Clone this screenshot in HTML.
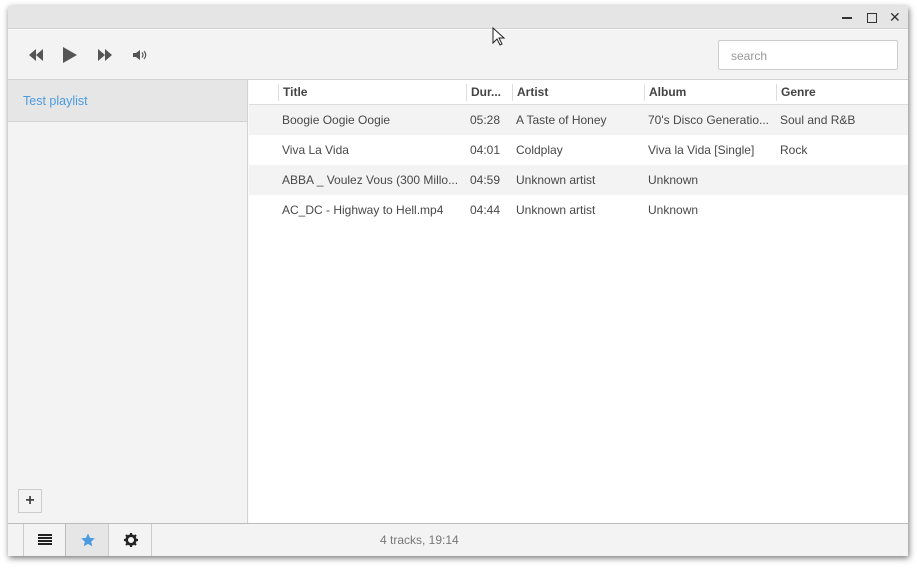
<!DOCTYPE html>
<html><head><style>
*{margin:0;padding:0;box-sizing:border-box}
body{width:917px;height:568px;background:#fff;position:relative;overflow:hidden;font-family:"Liberation Sans","DejaVu Sans",sans-serif;font-size:12px;color:#484848}
.a{position:absolute}
.win{left:8px;top:6px;width:900px;height:550px;background:#fafafa;box-shadow:1px 2px 6px rgba(0,0,0,.55);overflow:hidden}
.cell{position:absolute;white-space:nowrap;top:8px}
</style></head><body>
<div class="a win">
  <div class="a" style="left:0;top:0;width:900px;height:23px;background:#e5e5e5;border-bottom:1px solid #d2d2d2"></div>
  <div class="a" style="left:834px;top:11px;width:10px;height:2px;background:#333"></div>
  <div class="a" style="left:859px;top:7px;width:10px;height:10px;border:1.5px solid #333"></div>
  <div class="a" style="left:881px;top:3px;font-size:14px;color:#333;font-weight:bold">✕</div>
  <div class="a" style="left:0;top:24px;width:900px;height:50px;background:#f3f3f3;border-bottom:1px solid #d2d2d2"></div>
  <svg class="a" style="left:20px;top:40px" width="130" height="18" viewBox="0 0 130 18">
    <path d="M8 3v12L1 9zM15 3v12L8 9z" fill="#555"/>
    <path d="M35 1v16l14-8z" fill="#555"/>
    <path d="M70 3v12l7-6zM77 3v12l7-6z" fill="#555"/>
    <path d="M105 7h3l4-3v10l-4-3h-3z" fill="#555"/>
    <path d="M114 6.5q2 2.5 0 5M116 5q3.5 4 0 8" stroke="#555" stroke-width="1.2" fill="none"/>
  </svg>
  <svg class="a" style="left:484px;top:21px" width="14" height="20" viewBox="0 0 14 20"><path d="M1 1v15l4-4 3 6 2-1-3-6h5z" fill="#fff" stroke="#222" stroke-width="1"/></svg>
  <div class="a" style="left:710px;top:34px;width:180px;height:30px;background:#fff;border:1px solid #ccc;border-radius:2px;padding:8px 12px;color:#999;font-size:12px">search</div>
  <div class="a" style="left:0;top:74px;width:240px;height:443px;background:#f3f3f3;border-right:1px solid #d2d2d2"></div>
  <div class="a" style="left:0;top:74px;width:239px;height:42px;background:#e6e6e6;border-bottom:1px solid #d2d2d2;padding:14px 15px;color:#4a9be0;font-size:12.5px">Test playlist</div>
  <div class="a" style="left:10px;top:483px;width:24px;height:24px;border:1px solid #ccc;text-align:center;font-weight:bold;font-size:16px;line-height:21px;color:#444">+</div>
  <div class="a" style="left:241px;top:74px;width:659px;height:25px;background:#fff;border-bottom:1px solid #ddd;font-weight:bold;color:#444">
    <div class="a" style="left:29px;top:4px;height:17px;border-left:1px solid #ddd"></div>
    <div class="a" style="left:217px;top:4px;height:17px;border-left:1px solid #ddd"></div>
    <div class="a" style="left:263px;top:4px;height:17px;border-left:1px solid #ddd"></div>
    <div class="a" style="left:395px;top:4px;height:17px;border-left:1px solid #ddd"></div>
    <div class="a" style="left:527px;top:4px;height:17px;border-left:1px solid #ddd"></div>
    <div class="cell" style="left:34px;top:5px">Title</div>
    <div class="cell" style="left:222px;top:5px">Dur...</div>
    <div class="cell" style="left:268px;top:5px">Artist</div>
    <div class="cell" style="left:400px;top:5px">Album</div>
    <div class="cell" style="left:532px;top:5px">Genre</div>
  </div>
  <div class="a" style="left:241px;top:99px;width:659px;height:418px;background:#fff">
    <div class="a" style="left:0;top:0;width:659px;height:30px;background:#f3f3f3">
      <div class="cell" style="left:33px">Boogie Oogie Oogie</div><div class="cell" style="left:221px">05:28</div><div class="cell" style="left:267px">A Taste of Honey</div><div class="cell" style="left:399px">70's Disco Generatio...</div><div class="cell" style="left:531px">Soul and R&amp;B</div>
    </div>
    <div class="a" style="left:0;top:30px;width:659px;height:30px">
      <div class="cell" style="left:33px">Viva La Vida</div><div class="cell" style="left:221px">04:01</div><div class="cell" style="left:267px">Coldplay</div><div class="cell" style="left:399px">Viva la Vida [Single]</div><div class="cell" style="left:531px">Rock</div>
    </div>
    <div class="a" style="left:0;top:60px;width:659px;height:30px;background:#f3f3f3">
      <div class="cell" style="left:33px">ABBA _ Voulez Vous (300 Millo...</div><div class="cell" style="left:221px">04:59</div><div class="cell" style="left:267px">Unknown artist</div><div class="cell" style="left:399px">Unknown</div>
    </div>
    <div class="a" style="left:0;top:90px;width:659px;height:30px">
      <div class="cell" style="left:33px">AC_DC - Highway to Hell.mp4</div><div class="cell" style="left:221px">04:44</div><div class="cell" style="left:267px">Unknown artist</div><div class="cell" style="left:399px">Unknown</div>
    </div>
  </div>
  <div class="a" style="left:0;top:517px;width:900px;height:33px;background:#f3f3f3;border-top:1px solid #bbb"></div>
  <div class="a" style="left:15px;top:518px;width:43px;height:32px;border-left:1px solid #ccc;border-right:1px solid #bbb"></div>
  <div class="a" style="left:58px;top:518px;width:43px;height:32px;background:#e6e6e6;border-right:1px solid #ccc"></div>
  <div class="a" style="left:101px;top:518px;width:43px;height:32px;border-right:1px solid #ccc"></div>
  <svg class="a" style="left:30px;top:528px" width="14" height="11"><path d="M0 1h14M0 4h14M0 7h14M0 10h14" stroke="#222" stroke-width="2"/></svg>
  <svg class="a" style="left:73px;top:527px" width="14" height="14" viewBox="0 0 14 14"><path d="M7 0.5l2 4.4 4.8.5-3.6 3.2 1 4.7L7 10.9 2.8 13.3l1-4.7L.2 5.4 5 4.9z" fill="#4a9be0"/></svg>
  <svg class="a" style="left:116px;top:527px" width="14" height="14" viewBox="0 0 14 14"><circle cx="7" cy="7" r="4.3" fill="none" stroke="#222" stroke-width="2.6"/><path d="M7 0v3M7 11v3M0 7h3M11 7h3M2 2l2 2M10 10l2 2M2 12l2-2M10 4l2-2" stroke="#222" stroke-width="2.2"/></svg>
  <div class="a" style="left:372px;top:527px;color:#777;font-size:12px">4 tracks, 19:14</div>
</div>
</body></html>
